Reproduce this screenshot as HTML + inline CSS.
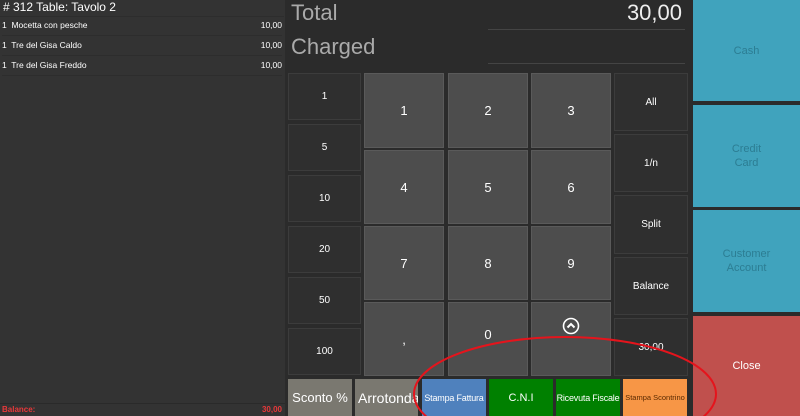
<!DOCTYPE html>
<html><head><meta charset="utf-8"><style>
*{margin:0;padding:0;box-sizing:border-box}
html{width:800px;height:416px;overflow:hidden}
body{width:800px;height:416px;background:#2b2b2b;font-family:"Segoe UI","Liberation Sans",sans-serif;position:relative;overflow:hidden;color:#fff}
.a{position:absolute}
.b{position:absolute;display:flex;align-items:center;justify-content:center;text-align:center;overflow:hidden}
.k{background:#2f2f2f;border:1px solid #3c3c3c;font-size:10px}
.n{background:#4d4d4d;border:1px solid #5a5a5a;font-size:13px}
.t{background:#40a3bd;color:#2c7d93;font-size:11px;line-height:14px}
.f{font-size:9px;letter-spacing:-0.2px}
svg{display:block}
</style></head><body>
<div class="a" style="left:0;top:0;width:285px;height:416px;background:#333"></div>
<div class="a" style="left:3px;top:0;font-size:12px;line-height:14px">#&nbsp;312 Table: Tavolo 2</div>
<div class="a" style="left:0;top:16px;width:284px;height:1px;background:#2d2d2d"></div>
<div class="a" style="left:2px;top:16px;width:280px;font-size:8.5px;line-height:19px">
<div style="display:flex;justify-content:space-between;border-bottom:1px solid #2d2d2d"><span>1&nbsp; Mocetta con pesche</span><span>10,00</span></div>
<div style="display:flex;justify-content:space-between;border-bottom:1px solid #2d2d2d"><span>1&nbsp; Tre del Gisa Caldo</span><span>10,00</span></div>
<div style="display:flex;justify-content:space-between;border-bottom:1px solid #2d2d2d"><span>1&nbsp; Tre del Gisa Freddo</span><span>10,00</span></div>
</div>
<div class="a" style="left:0;top:403px;width:285px;height:1px;background:#2a2a2a"></div>
<div class="a" style="left:2px;top:404px;width:280px;height:12px;line-height:12px;font-size:8px;font-weight:bold;color:#e8383a;display:flex;justify-content:space-between"><span>Balance:</span><span>30,00</span></div>

<div class="a" style="left:291px;top:0;font-size:22px;line-height:26px;color:#aaa;font-weight:300">Total</div>
<div class="a" style="right:118px;top:0;font-size:22px;line-height:26px;color:#eee">30,00</div>
<div class="a" style="left:488px;top:29px;width:197px;height:1px;background:#444"></div>
<div class="a" style="left:291px;top:34px;font-size:22px;line-height:26px;color:#aaa;font-weight:300">Charged</div>
<div class="a" style="left:488px;top:63px;width:197px;height:1px;background:#444"></div>

<div class="b k" style="left:288px;top:73px;width:73px;height:47px">1</div>
<div class="b k" style="left:288px;top:124px;width:73px;height:47px">5</div>
<div class="b k" style="left:288px;top:175px;width:73px;height:47px">10</div>
<div class="b k" style="left:288px;top:226px;width:73px;height:47px">20</div>
<div class="b k" style="left:288px;top:277px;width:73px;height:47px">50</div>
<div class="b k" style="left:288px;top:328px;width:73px;height:47px">100</div>

<div class="b n" style="left:364px;top:73px;width:80px;height:75px">1</div>
<div class="b n" style="left:448px;top:73px;width:80px;height:75px">2</div>
<div class="b n" style="left:531px;top:73px;width:80px;height:75px">3</div>
<div class="b n" style="left:364px;top:150px;width:80px;height:74px">4</div>
<div class="b n" style="left:448px;top:150px;width:80px;height:74px">5</div>
<div class="b n" style="left:531px;top:150px;width:80px;height:74px">6</div>
<div class="b n" style="left:364px;top:226px;width:80px;height:74px">7</div>
<div class="b n" style="left:448px;top:226px;width:80px;height:74px">8</div>
<div class="b n" style="left:531px;top:226px;width:80px;height:74px">9</div>
<div class="b n" style="left:364px;top:302px;width:80px;height:74px">,</div>
<div class="b n" style="left:448px;top:302px;width:80px;height:74px;padding-bottom:10px">0</div>
<div class="b n" style="left:531px;top:302px;width:80px;height:74px;padding-bottom:26px"><svg width="18" height="18" viewBox="0 0 18 18"><circle cx="9" cy="9" r="7.5" fill="none" stroke="#fff" stroke-width="1.6"/><path d="M5.5 10.5 L9 7 L12.5 10.5" fill="none" stroke="#fff" stroke-width="2"/></svg></div>

<div class="b k" style="left:614px;top:73px;width:74px;height:58px">All</div>
<div class="b k" style="left:614px;top:134px;width:74px;height:58px">1/n</div>
<div class="b k" style="left:614px;top:195px;width:74px;height:59px">Split</div>
<div class="b k" style="left:614px;top:257px;width:74px;height:58px">Balance</div>
<div class="b k" style="left:614px;top:318px;width:74px;height:58px">30,00</div>

<div class="b" style="left:288px;top:379px;width:64px;height:37px;background:#7a7870;font-size:13px">Sconto %</div>
<div class="b" style="left:355px;top:379px;width:63px;height:37px;background:#7a7870;font-size:14px;justify-content:flex-start;padding-left:3px;white-space:nowrap">Arrotonda</div>
<div class="b f" style="left:422px;top:379px;width:64px;height:37px;background:#4f81bd">Stampa Fattura</div>
<div class="b" style="left:489px;top:379px;width:64px;height:37px;background:#008000;font-size:11px">C.N.I</div>
<div class="b f" style="left:556px;top:379px;width:64px;height:37px;background:#008000">Ricevuta Fiscale</div>
<div class="b" style="left:623px;top:379px;width:64px;height:37px;background:#f79646;color:#5a2a00;font-size:7.5px">Stampa Scontrino</div>

<div class="b t" style="left:693px;top:0;width:107px;height:101px">Cash</div>
<div class="b t" style="left:693px;top:105px;width:107px;height:102px">Credit<br>Card</div>
<div class="b t" style="left:693px;top:210px;width:107px;height:102px">Customer<br>Account</div>
<div class="b" style="left:693px;top:316px;width:107px;height:100px;background:#c0504d;font-size:11px">Close</div>

<svg class="a" style="left:0;top:0" width="800" height="416"><ellipse cx="565" cy="394" rx="151" ry="57" fill="none" stroke="#e5141c" stroke-width="2"/></svg>
</body></html>
